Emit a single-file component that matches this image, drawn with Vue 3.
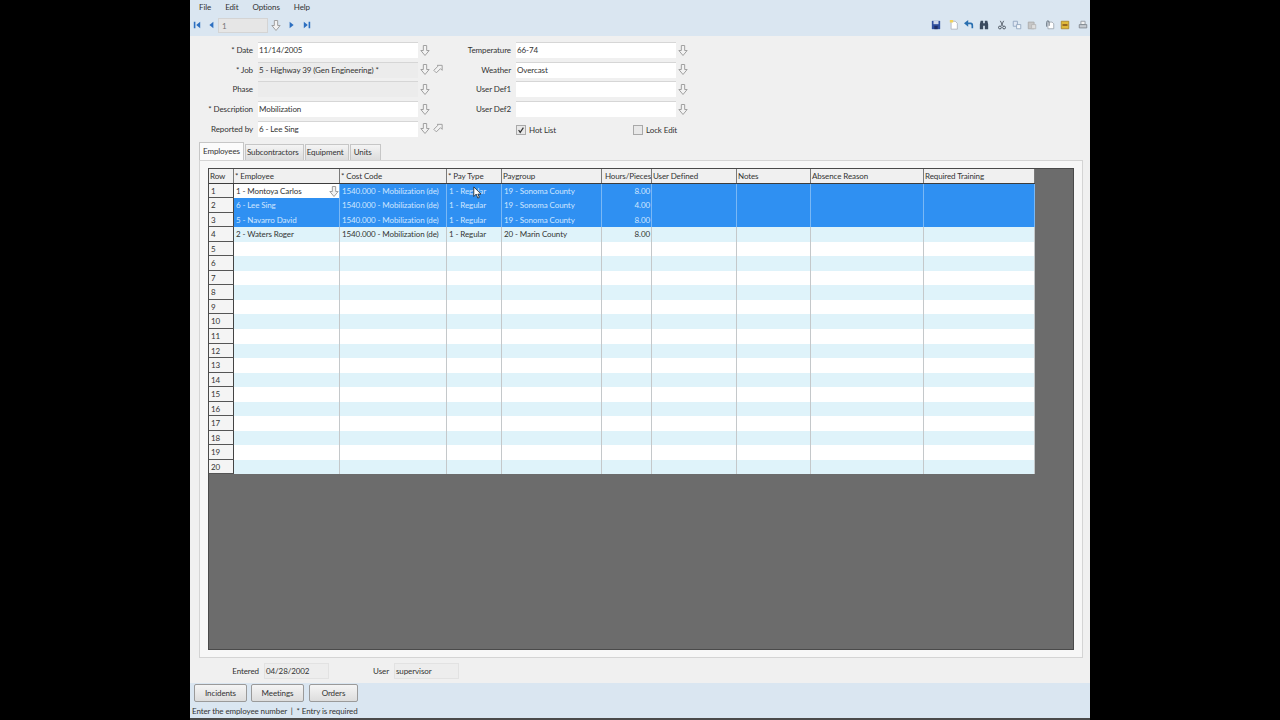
<template>
  <div class="window">
    <div class="topbar">
      <div class="menu">
        <span v-for="m in menus" :key="m">{{ m }}</span>
      </div>
      <div class="toolbar">
        <svg class="tb first" viewBox="0 0 10 10"><path d="M1 1h2v8H1zM9 1v8L4 5z" /></svg>
        <svg class="tb prev" viewBox="0 0 10 10"><path d="M8 1v8L3 5z" /></svg>
        <div class="record">1</div>
        <svg class="arrow nav-arrow" viewBox="0 0 12 14"><path d="M4 1h4v6h3L6 13 1 7h3z" /></svg>
        <svg class="tb next" viewBox="0 0 10 10"><path d="M2 1v8l5-4z" /></svg>
        <svg class="tb last" viewBox="0 0 10 10"><path d="M1 1v8l5-4zM7 1h2v8H7z" /></svg>
        <div class="tools">
          <svg viewBox="0 0 12 12"><path fill="#2f4f9f" d="M1 1h10v10H1z" /><path fill="#cfd8ea" d="M3 1h6v4H3z" /><path fill="#1e2f66" d="M4 7h4v4H4z" /></svg>
          <svg class="wide" viewBox="0 0 12 12"><path fill="#fff" stroke="#a9b0ba" d="M2.500 1.500h5l2.500 2.500v7h-7.500z" /><path fill="#f2d35a" d="M1 0h4v3H1z" /></svg>
          <svg viewBox="0 0 12 12"><path fill="none" stroke="#2a6fb0" stroke-width="2" d="M4 4h4q2 0 2 3v3" /><path fill="#2a6fb0" d="M5 0v8L0 4z" /></svg>
          <svg viewBox="0 0 12 12"><path fill="#3b4a5e" d="M1 5l1-4h3v3h2V1h3l1 4v6H7V7H5v4H1z" /></svg>
          <svg class="wide" viewBox="0 0 12 12"><path fill="none" stroke="#5a6470" stroke-width="1.200" d="M4 1l3 6M8 1L5 7" /><circle cx="3.500" cy="9" r="1.700" fill="none" stroke="#39424e" /><circle cx="8.500" cy="9" r="1.700" fill="none" stroke="#39424e" /></svg>
          <svg viewBox="0 0 12 12"><path fill="#dfe7f3" stroke="#8ea2bd" d="M1.500 1.500h5v6h-5z" /><path fill="#f4f7fb" stroke="#8ea2bd" d="M5.500 5.500h5v5h-5z" /></svg>
          <svg viewBox="0 0 12 12"><path fill="#c7c7c7" stroke="#a8a8a8" d="M1.500 2.500h7v8h-7z" /><path fill="#dedede" stroke="#b4b4b4" d="M5.500 5.500h5v5h-5z" /></svg>
          <svg class="wide" viewBox="0 0 12 12"><path fill="#fff" stroke="#9ba3ad" d="M3.500 2.500h5l2 2v6h-7z" /><path fill="none" stroke="#55606c" d="M2 8V3q0-2 1.500-2T5 3v4" /></svg>
          <svg viewBox="0 0 12 12"><path fill="#e0b93a" stroke="#a8842a" d="M1.500 1.500h9v9h-9z" /><path fill="#8a5a1e" d="M3 5h6v2H3z" /></svg>
          <svg class="wide" viewBox="0 0 12 12"><path fill="#f2f2f2" stroke="#8d939a" d="M3.500 1.500h5v4h-5z" /><path fill="#c4c9cf" stroke="#7d848c" d="M1.500 5.500h9v4h-9z" /></svg>
        </div>
      </div>
    </div>

    <div class="form">
      <div class="fields">
        <div v-for="f in leftFields" :key="f.label" class="field">
          <label>{{ f.label }}</label>
          <div class="input" :class="{ locked: f.locked }">{{ f.value }}</div>
          <svg class="arrow" viewBox="0 0 12 14"><path d="M4 1h4v6h3L6 13 1 7h3z" /></svg>
          <svg v-if="f.jump" class="arrow" viewBox="0 0 12 14"><path d="M5 2h6v6L9 6l-5 5-3-3 5-5z" /></svg>
        </div>
      </div>
      <div class="fields right">
        <div v-for="f in rightFields" :key="f.label" class="field">
          <label>{{ f.label }}</label>
          <div class="input">{{ f.value }}</div>
          <svg class="arrow" viewBox="0 0 12 14"><path d="M4 1h4v6h3L6 13 1 7h3z" /></svg>
        </div>
        <div class="checks">
          <div class="check hot"><span class="box">
            <svg viewBox="0 0 10 10"><path d="M2 5l2 3 4-6" /></svg>
          </span>Hot List</div>
          <div class="check"><span class="box"></span>Lock Edit</div>
        </div>
      </div>
    </div>

    <div class="tabs">
      <div v-for="(t, i) in tabs" :key="t" class="tab" :class="{ active: i === 0 }">{{ t }}</div>
    </div>
    <div class="panel">
      <div class="grid">
        <div class="table">
          <div class="row head">
            <div v-for="c in columns" :key="c" class="cell">{{ c }}</div>
          </div>
          <div
            v-for="n in 20"
            :key="n"
            class="row"
            :class="{ even: n % 2 === 0, selected: n <= 3 }"
          >
            <div class="cell num">{{ n }}</div>
            <div class="cell" :class="{ editing: n === 1 }">
              {{ rows[n - 1]?.employee }}
              <svg v-if="n === 1" class="arrow cell-arrow" viewBox="0 0 12 14"><path d="M4 1h4v6h3L6 13 1 7h3z" /></svg>
            </div>
            <div class="cell">{{ rows[n - 1]?.code }}</div>
            <div class="cell">{{ rows[n - 1]?.pay }}</div>
            <div class="cell">{{ rows[n - 1]?.group }}</div>
            <div class="cell hours">{{ rows[n - 1]?.hours }}</div>
            <div class="cell"></div>
            <div class="cell"></div>
            <div class="cell"></div>
            <div class="cell"></div>
          </div>
        </div>
      </div>
      <svg class="cursor" viewBox="0 0 10 16"><path d="M1 1v12l3-3 2 5 2-1-2-4h4z" /></svg>
    </div>

    <div class="entered">
      <label>Entered</label>
      <div class="readonly">04/28/2002</div>
      <label class="user-label">User</label>
      <div class="readonly">supervisor</div>
    </div>

    <div class="bottom">
      <div class="buttons">
        <button v-for="b in buttons" :key="b">{{ b }}</button>
      </div>
      <div class="status">Enter the employee number &nbsp;|&nbsp; * Entry is required</div>
    </div>
  </div>
</template>

<script setup>
const menus = ['File', 'Edit', 'Options', 'Help']
const tabs = ['Employees', 'Subcontractors', 'Equipment', 'Units']
const buttons = ['Incidents', 'Meetings', 'Orders']

const leftFields = [
  { label: '* Date', value: '11/14/2005' },
  { label: '* Job', value: '5 - Highway 39 (Gen Engineering) *', locked: true, jump: true },
  { label: 'Phase', value: '', locked: true },
  { label: '* Description', value: 'Mobilization' },
  { label: 'Reported by', value: '6 - Lee Sing', jump: true }
]

const rightFields = [
  { label: 'Temperature', value: '66-74' },
  { label: 'Weather', value: 'Overcast' },
  { label: 'User Def1', value: '' },
  { label: 'User Def2', value: '' }
]

const columns = [
  'Row', '* Employee', '* Cost Code', '* Pay Type', 'Paygroup',
  'Hours/Pieces', 'User Defined', 'Notes', 'Absence Reason', 'Required Training'
]

const code = '1540.000 - Mobilization (de)'
const rows = [
  { employee: '1 - Montoya Carlos', code, pay: '1 - Regular', group: '19 - Sonoma County', hours: '8.00' },
  { employee: '6 - Lee Sing', code, pay: '1 - Regular', group: '19 - Sonoma County', hours: '4.00' },
  { employee: '5 - Navarro David', code, pay: '1 - Regular', group: '19 - Sonoma County', hours: '8.00' },
  { employee: '2 - Waters Roger', code, pay: '1 - Regular', group: '20 - Marin County', hours: '8.00' }
]
</script>

<style>
html,
body {
  margin: 0;
  background: #000;
}
</style>

<style scoped>
.window {
  width: 900px;
  height: 720px;
  margin: 0 auto;
  background: #f0f0f0;
  color: #333;
  font-family: Lato, "Open Sans", sans-serif;
  font-size: 8px;
  letter-spacing: -0.1px;
  display: flex;
  flex-direction: column;
  overflow: hidden;
}

.topbar {
  height: 36px;
  background: #dae6f1;
  flex: none;
}

.menu {
  height: 14px;
  display: flex;
  align-items: center;
  gap: 14px;
  padding-left: 9px;
}

.toolbar {
  height: 22px;
  display: flex;
  align-items: center;
  padding-left: 3px;
}

.tb {
  width: 8px;
  height: 8px;
  fill: #2c6fc0;
  flex: none;
}

.prev {
  margin-left: 6px;
}

.record {
  width: 50px;
  height: 15px;
  line-height: 15px;
  margin-left: 3px;
  padding-left: 3px;
  background: #e6e6e6;
  border: 1px solid #d4d4d4;
  box-sizing: border-box;
  color: #777;
}

.next {
  margin-left: 7px;
}

.last {
  margin-left: 7px;
}

.tools {
  margin-left: auto;
  display: flex;
  align-items: center;
  gap: 5px;
  padding-right: 2px;
}

.tools svg {
  width: 10px;
  height: 10px;
  flex: none;
}

.tools svg.wide {
  margin-left: 3px;
}

.arrow {
  width: 10px;
  height: 13px;
  fill: #f2f2f2;
  stroke: #a0a0a0;
  stroke-width: 1.200;
  flex: none;
}

.nav-arrow {
  margin-left: 3px;
}

.form {
  height: 105px;
  flex: none;
  display: flex;
  padding-top: 6px;
  box-sizing: border-box;
}

.fields {
  width: 258px;
  display: flex;
  flex-direction: column;
  gap: 3.700px;
}

.fields.right {
  width: 500px;
}

.field {
  height: 16px;
  display: flex;
  align-items: center;
  gap: 3px;
}

.field label {
  width: 63px;
  text-align: right;
  margin-right: 2px;
  flex: none;
}

.input {
  width: 160px;
  height: 16px;
  line-height: 14px;
  background: #fff;
  border-top: 1px solid #d6d6d6;
  box-sizing: border-box;
  padding-left: 1px;
  margin-right: -1px;
  flex: none;
}

.locked {
  background: #ececec;
}

.checks {
  display: flex;
  padding-left: 68px;
}

.check {
  display: flex;
  align-items: center;
  gap: 3px;
  height: 18px;
}

.check.hot {
  width: 117px;
}

.box {
  width: 8px;
  height: 8px;
  background: #e8e8e8;
  border: 1px solid #a9a9a9;
  display: block;
}

.box svg {
  display: block;
  fill: none;
  stroke: #333;
  stroke-width: 1.500;
}

.tabs {
  height: 18px;
  flex: none;
  display: flex;
  align-items: flex-end;
  padding-left: 9px;
  margin-top: 1px;
}

.tab {
  height: 16px;
  line-height: 15px;
  padding: 0 4px 0 1px;
  margin-right: 1px;
  background: linear-gradient(#f4f4f4, #dcdcdc);
  border: 1px solid #c6c6c6;
  border-bottom: 0;
  box-sizing: border-box;
}

.tab:last-child {
  padding: 0 8px 0 3px;
}

.tab.active {
  height: 18px;
  line-height: 16px;
  padding: 0 3px;
  background: #fbfbfb;
}

.panel {
  position: relative;
  width: 884px;
  height: 498px;
  margin-left: 9px;
  padding: 7px 8px;
  box-sizing: border-box;
  background: #f7f7f7;
  border: 1px solid #d4d4d4;
  flex: none;
}

.grid {
  height: 482px;
  background: #6c6c6c;
  border: 1px solid #4a4a4a;
  box-sizing: border-box;
}

.table {
  width: 826px;
}

.row {
  display: grid;
  grid-template-columns: 25px 106px 107px 55px 100px 50px 85px 74px 113px 111px;
  height: 14.550px;
  background: #fff;
}

.row.even {
  background: #dff3fa;
}

.row.selected {
  background: #2f90f2;
  color: #cfe6ff;
}

.row.head {
  height: 14.500px;
  box-sizing: border-box;
  background: #f0f0f0;
  color: #333;
  border-bottom: 1px solid #3c3c3c;
}

.cell {
  position: relative;
  line-height: 14.500px;
  padding-left: 2px;
  border-right: 1px solid #c4c8ca;
  box-sizing: border-box;
  white-space: nowrap;
  overflow: hidden;
}

.head .cell {
  padding-left: 1px;
  border-right-color: #7a7a7a;
}

.cell.num {
  background: #f4f4f4;
  color: #333;
  border-right: 1px solid #444;
  border-bottom: 1px solid #555;
}

.selected .cell {
  border-right-color: #7ab8f5;
}

.selected .cell.num {
  border-right-color: #444;
}

.hours {
  text-align: right;
  padding-right: 1px;
}

.head .cell:nth-child(6) {
  text-align: right;
}

.cell.editing {
  background: #fff;
  color: #333;
}

.cell-arrow {
  position: absolute;
  right: 0;
  top: 1px;
}

.cursor {
  position: absolute;
  left: 273px;
  top: 25px;
  width: 8px;
  height: 13px;
  fill: #fff;
  stroke: #222;
  stroke-width: 1;
}

.entered {
  height: 25px;
  flex: none;
  display: flex;
  align-items: center;
  box-sizing: border-box;
}

.entered label {
  width: 69px;
  text-align: right;
  margin-right: 5px;
}

.entered .user-label {
  width: 60px;
}

.readonly {
  width: 65px;
  height: 16px;
  line-height: 14px;
  padding-left: 1px;
  background: #ededed;
  border: 1px solid #e2e2e2;
  box-sizing: border-box;
}

.bottom {
  flex: 1;
  background: #dae6f1;
  border-bottom: 2px solid #4a4a4a;
  padding: 1px 0 0 4px;
  box-sizing: border-box;
}

.buttons {
  display: flex;
  gap: 4px;
}

button {
  width: 53px;
  height: 18px;
  padding: 0;
  font: inherit;
  letter-spacing: inherit;
  color: #333;
  background: linear-gradient(#f5f5f5, #dddddd);
  border: 1px solid #9a9a9a;
  border-radius: 2px;
}

button:last-child {
  width: 49px;
  margin-left: 1px;
}

.status {
  margin: 4px 0 0 -2px;
  white-space: nowrap;
}
</style>
